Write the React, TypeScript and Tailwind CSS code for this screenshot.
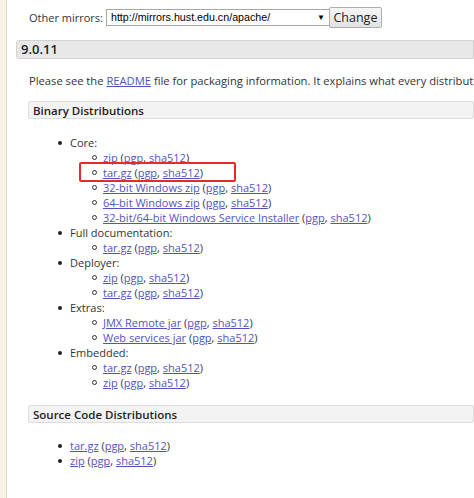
import React from 'react';

type Link = { label: string };

const sans = { fontFamily: '"Open Sans", "Liberation Sans", sans-serif' };

function Sig({ name }: { name: string }) {
  return (
    <>
      <a className="text-[#5353c0] underline">{name}</a> (
      <a className="text-[#5353c0] underline">pgp</a>,{' '}
      <a className="text-[#5353c0] underline">sha512</a>)
    </>
  );
}

function Disc({ children }: { children: React.ReactNode }) {
  return (
    <div className="flex h-[15px] items-center">
      <span className="ml-[51px] mr-[8px] h-[4px] w-[4px] rounded-full bg-[#222]" />
      <span className="whitespace-nowrap">{children}</span>
    </div>
  );
}

function Circle({ name, boxed }: { name: string; boxed?: boolean }) {
  return (
    <div className="relative flex h-[15px] items-center">
      {boxed && (
        <span className="absolute left-[72px] top-[-3px] h-[20px] w-[157px] rounded-[2px] border-2 border-[#e42a2a]" />
      )}
      <span className="ml-[85px] mr-[6px] h-[5px] w-[5px] rounded-full border border-[#333]" />
      <span className="whitespace-nowrap">
        <Sig name={name} />
      </span>
    </div>
  );
}

function SectionBar({ title }: { title: string }) {
  return (
    <div className="ml-[21px] flex h-[18px] items-center rounded-[2px] border border-[#dcdcdc] bg-[#f3f3f3] pl-[4px] text-[11.5px] font-semibold text-[#222]">
      {title}
    </div>
  );
}

export default function App() {
  return (
    <div
      className="flex h-[498px] w-[474px] overflow-hidden bg-white text-[11px] leading-[15px] text-[#333]"
      style={sans}
    >
      <div className="w-[7px] shrink-0 border-r border-[#dcd7c6] bg-[#f7f3e4]" />
      <div className="min-w-0 flex-1 overflow-hidden">
        <div className="mt-[6px] flex h-[22px] items-center pl-[22px]">
          <span className="mr-[3px] whitespace-nowrap">Other mirrors:</span>
          <div
            className="flex h-[17px] w-[225px] items-center justify-between border border-[#a6a6a6] bg-white pl-[4px] pr-[5px] text-[10.7px] text-black"
            style={{ fontFamily: '"Liberation Sans", Arial, sans-serif' }}
          >
            <span>http://mirrors.hust.edu.cn/apache/</span>
            <span className="text-[8px]">▼</span>
          </div>
          <button className="ml-[-2px] h-[21px] w-[53px] rounded-[2px] border border-[#adadad] bg-gradient-to-b from-[#f6f6f6] to-[#e2e2e2] text-[12.5px] text-[#222]">
            Change
          </button>
        </div>

        <div className="ml-[9px] mt-[12px] flex h-[19px] items-center rounded-l-[3px] border border-[#d2d2d2] bg-[#e8e8e8] pl-[4px] text-[13px] font-semibold text-[#222]">
          9.0.11
        </div>

        <p className="mt-[14px] whitespace-nowrap pl-[22px] text-[11.2px]">
          Please see the <a className="text-[#5353c0] underline">README</a> file for packaging information. It explains
          what every distribution contains.
        </p>

        <div className="mt-[13px]">
          <SectionBar title="Binary Distributions" />
        </div>

        <div className="mt-[16px]">
          <Disc>Core:</Disc>
          <Circle name="zip" />
          <Circle name="tar.gz" boxed />
          <Circle name="32-bit Windows zip" />
          <Circle name="64-bit Windows zip" />
          <Circle name="32-bit/64-bit Windows Service Installer" />
          <Disc>Full documentation:</Disc>
          <Circle name="tar.gz" />
          <Disc>Deployer:</Disc>
          <Circle name="zip" />
          <Circle name="tar.gz" />
          <Disc>Extras:</Disc>
          <Circle name="JMX Remote jar" />
          <Circle name="Web services jar" />
          <Disc>Embedded:</Disc>
          <Circle name="tar.gz" />
          <Circle name="zip" />
        </div>

        <div className="mt-[15px]">
          <SectionBar title="Source Code Distributions" />
        </div>

        <div className="mt-[15px]">
          <Disc>
            <Sig name="tar.gz" />
          </Disc>
          <Disc>
            <Sig name="zip" />
          </Disc>
        </div>
      </div>
    </div>
  );
}
